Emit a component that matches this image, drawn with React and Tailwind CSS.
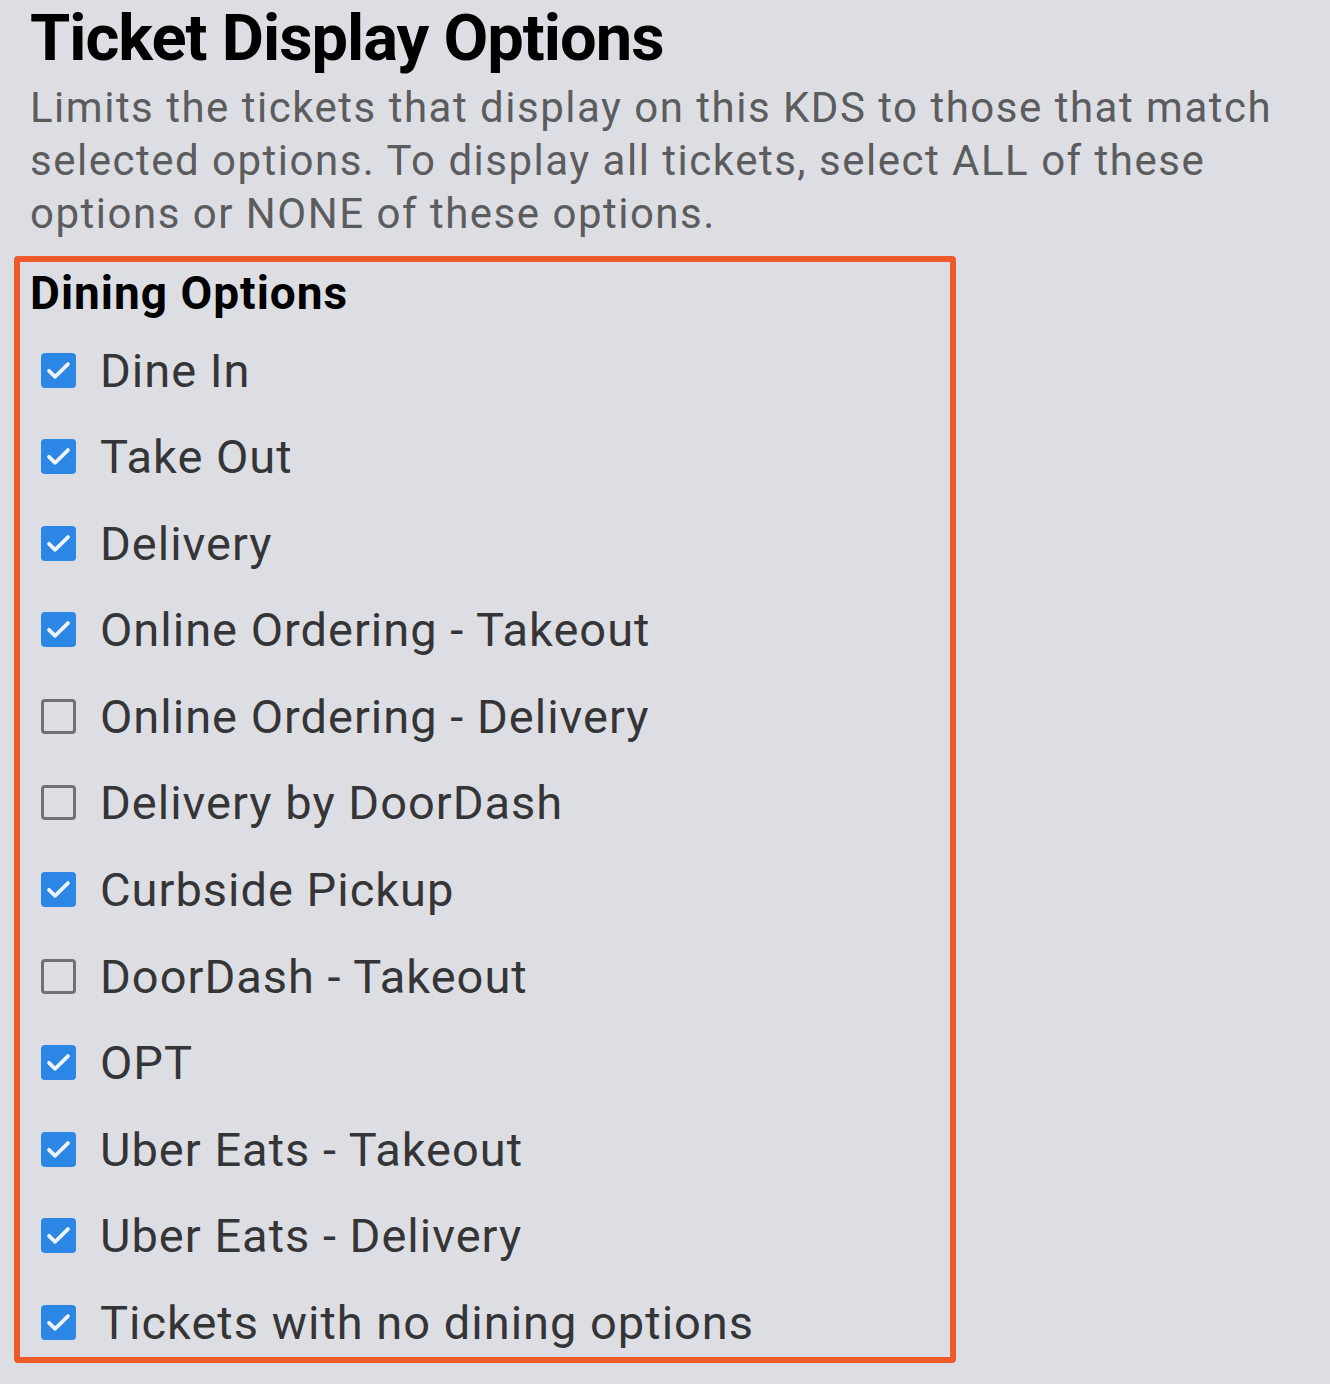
const OPTIONS = [
  { label: 'Dine In', checked: true },
  { label: 'Take Out', checked: true },
  { label: 'Delivery', checked: true },
  { label: 'Online Ordering - Takeout', checked: true },
  { label: 'Online Ordering - Delivery', checked: false },
  { label: 'Delivery by DoorDash', checked: false },
  { label: 'Curbside Pickup', checked: true },
  { label: 'DoorDash - Takeout', checked: false },
  { label: 'OPT', checked: true },
  { label: 'Uber Eats - Takeout', checked: true },
  { label: 'Uber Eats - Delivery', checked: true },
  { label: 'Tickets with no dining options', checked: true },
];

function Checkbox({ checked }) {
  if (checked) {
    return (
      <span className="w-[35px] h-[35px] rounded-[4px] bg-[#2b86e6] flex items-center justify-center shrink-0">
        <svg viewBox="0 0 24 24" className="w-[35px] h-[35px]" fill="none" stroke="#eef3fc" strokeWidth="2.6" strokeLinecap="round" strokeLinejoin="round">
          <path d="M5.5 12.2l4.2 4.1L18.5 7.6" />
        </svg>
      </span>
    );
  }
  return <span className="w-[35px] h-[35px] rounded-[4px] border-[3px] border-[#707075] shrink-0" />;
}

export default function App() {
  return (
    <div className="min-h-screen bg-[#dddee3] font-['Roboto',sans-serif]">
      <h1 className="pl-[30px] text-[65px] leading-[76px] font-bold text-black tracking-[-1px]">
        Ticket Display Options
      </h1>
      <p className="pl-[30px] pr-[30px] text-[42px] leading-[53px] text-[#5c5c5e] tracking-[1.5px] mt-[5px]">
        Limits the tickets that display on this KDS to those that match selected options. To display all tickets, select ALL of these options or NONE of these options.
      </p>
      <div className="ml-[14px] mt-[16px] w-[942px] border-[6px] border-[#ef5a2a] rounded-[4px] pl-[10px] pb-[4px]">
        <h2 className="text-[46px] leading-[62px] font-bold text-black tracking-[1px]">Dining Options</h2>
        <ul className="mt-[16px] flex flex-col gap-[26.6px]">
          {OPTIONS.map((opt) => (
            <li key={opt.label} className="h-[60px] flex items-center gap-[24px] pl-[11px]">
              <Checkbox checked={opt.checked} />
              <span className="text-[47px] text-[#353537] tracking-[1px] leading-none">{opt.label}</span>
            </li>
          ))}
        </ul>
      </div>
    </div>
  );
}
